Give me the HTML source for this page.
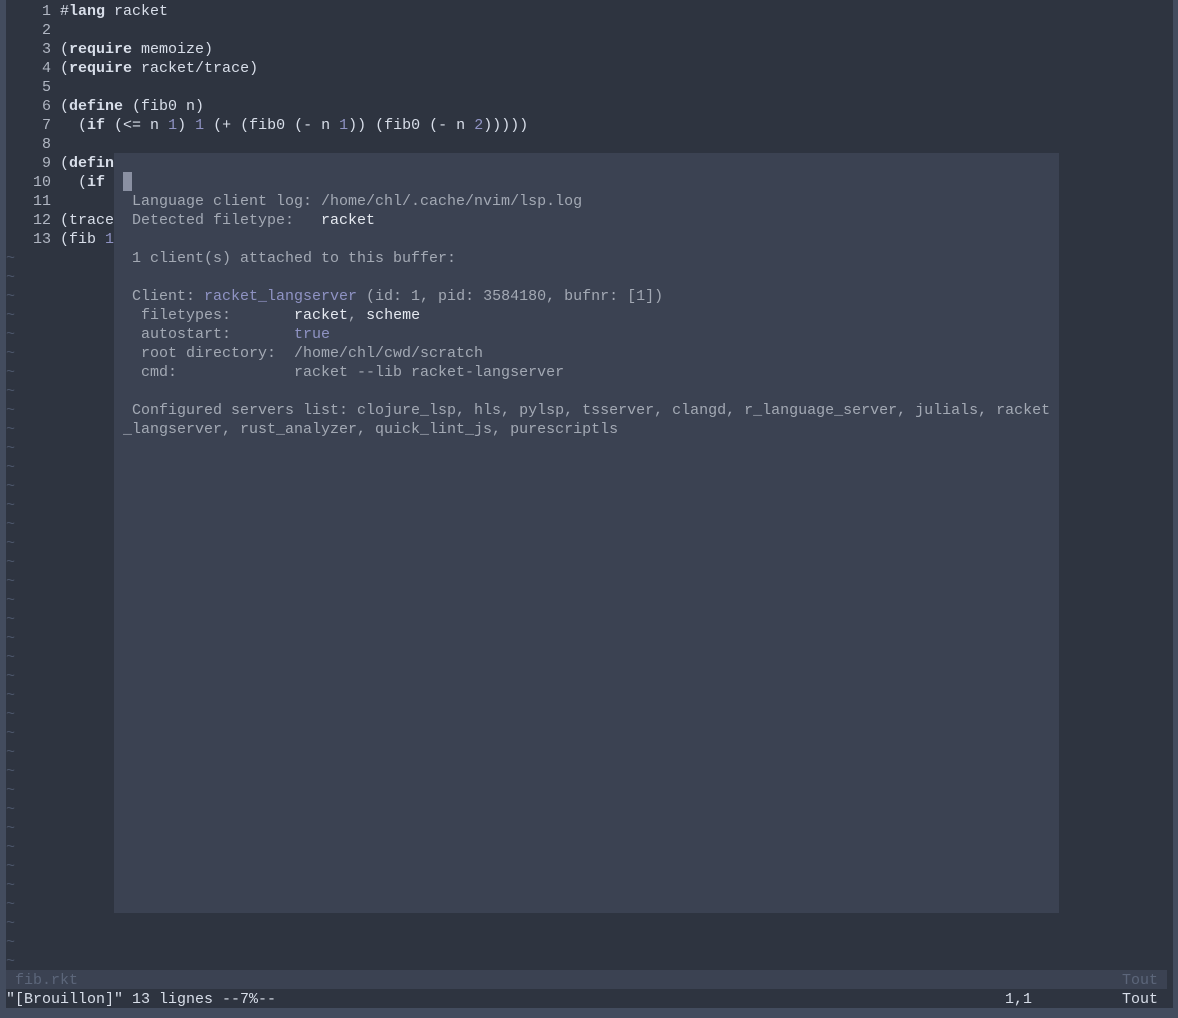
<!DOCTYPE html>
<html><head><meta charset="utf-8"><style>
html,body{margin:0;padding:0}
body{width:1178px;height:1018px;background:#2e3440;position:relative;overflow:hidden;font-family:"Liberation Mono",monospace;font-size:15px;color:#d8dee9}
.l{position:absolute;left:6px;height:19px;line-height:19px;white-space:pre;margin-top:1px}
.n{color:#b0b6c2}
.k{font-weight:bold}
.p{color:#8f93c4}
.t{color:#4c566a}
#pop{position:absolute;left:114px;top:153px;width:945px;height:760px;background:#3b4252}
.g{color:#a3a9b4}
.w{color:#e5e9f0}
</style></head><body>
<div style="position:absolute;left:0;top:0;width:6px;height:1018px;background:#434c5e"></div>
<div style="position:absolute;right:0;top:0;width:5px;height:1018px;background:#434c5e"></div>
<div style="position:absolute;left:0;bottom:0;width:1178px;height:10px;background:#434c5e"></div>

<div class="l" style="top:1px"><span class="n">    1 </span>#<span class="k">lang</span> racket</div>
<div class="l" style="top:20px"><span class="n">    2 </span></div>
<div class="l" style="top:39px"><span class="n">    3 </span>(<span class="k">require</span> memoize)</div>
<div class="l" style="top:58px"><span class="n">    4 </span>(<span class="k">require</span> racket/trace)</div>
<div class="l" style="top:77px"><span class="n">    5 </span></div>
<div class="l" style="top:96px"><span class="n">    6 </span>(<span class="k">define</span> (fib0 n)</div>
<div class="l" style="top:115px"><span class="n">    7 </span>  (<span class="k">if</span> (&lt;= n <span class="p">1</span>) <span class="p">1</span> (+ (fib0 (- n <span class="p">1</span>)) (fib0 (- n <span class="p">2</span>)))))</div>
<div class="l" style="top:134px"><span class="n">    8 </span></div>
<div class="l" style="top:153px"><span class="n">    9 </span>(<span class="k">defin</span></div>
<div class="l" style="top:172px"><span class="n">   10 </span>  (<span class="k">if</span></div>
<div class="l" style="top:191px"><span class="n">   11 </span></div>
<div class="l" style="top:210px"><span class="n">   12 </span>(trace</div>
<div class="l" style="top:229px"><span class="n">   13 </span>(fib <span class="p">1</span></div>
<div id="tildes"></div>
<script>
var h='';for(var r=13;r<=50;r++){h+='<div class="l t" style="top:'+(1+r*19)+'px">~</div>';}
document.getElementById('tildes').outerHTML=h;
</script>

<div id="pop">
<div style="position:absolute;left:9px;top:19px;width:9px;height:19px;background:#8a90a2"></div>
<div class="l g" style="left:9px;top:38px"> Language client log: /home/chl/.cache/nvim/lsp.log</div>
<div class="l g" style="left:9px;top:57px"> Detected filetype:   <span class="w">racket</span></div>
<div class="l g" style="left:9px;top:95px"> 1 client(s) attached to this buffer:</div>
<div class="l g" style="left:9px;top:133px"> Client: <span class="p">racket_langserver</span> (id: 1, pid: 3584180, bufnr: [1])</div>
<div class="l g" style="left:9px;top:152px">  filetypes:       <span class="w">racket</span>, <span class="w">scheme</span></div>
<div class="l g" style="left:9px;top:171px">  autostart:       <span class="p">true</span></div>
<div class="l g" style="left:9px;top:190px">  root directory:  /home/chl/cwd/scratch</div>
<div class="l g" style="left:9px;top:209px">  cmd:             racket --lib racket-langserver</div>
<div class="l g" style="left:9px;top:247px"> Configured servers list: clojure_lsp, hls, pylsp, tsserver, clangd, r_language_server, julials, racket</div>
<div class="l g" style="left:9px;top:266px">_langserver, rust_analyzer, quick_lint_js, purescriptls</div>
</div>

<div style="position:absolute;left:6px;top:970px;width:1161px;height:19px;background:#3b4252"></div>
<div class="l t" style="top:970px;color:#5c667a"> fib.rkt</div>
<div class="l t" style="top:970px;left:1122px;color:#5c667a">Tout</div>
<div class="l" style="top:989px">"[Brouillon]" 13 lignes --7%--</div>
<div class="l" style="top:989px;left:1005px">1,1</div>
<div class="l" style="top:989px;left:1122px">Tout</div>
</body></html>
